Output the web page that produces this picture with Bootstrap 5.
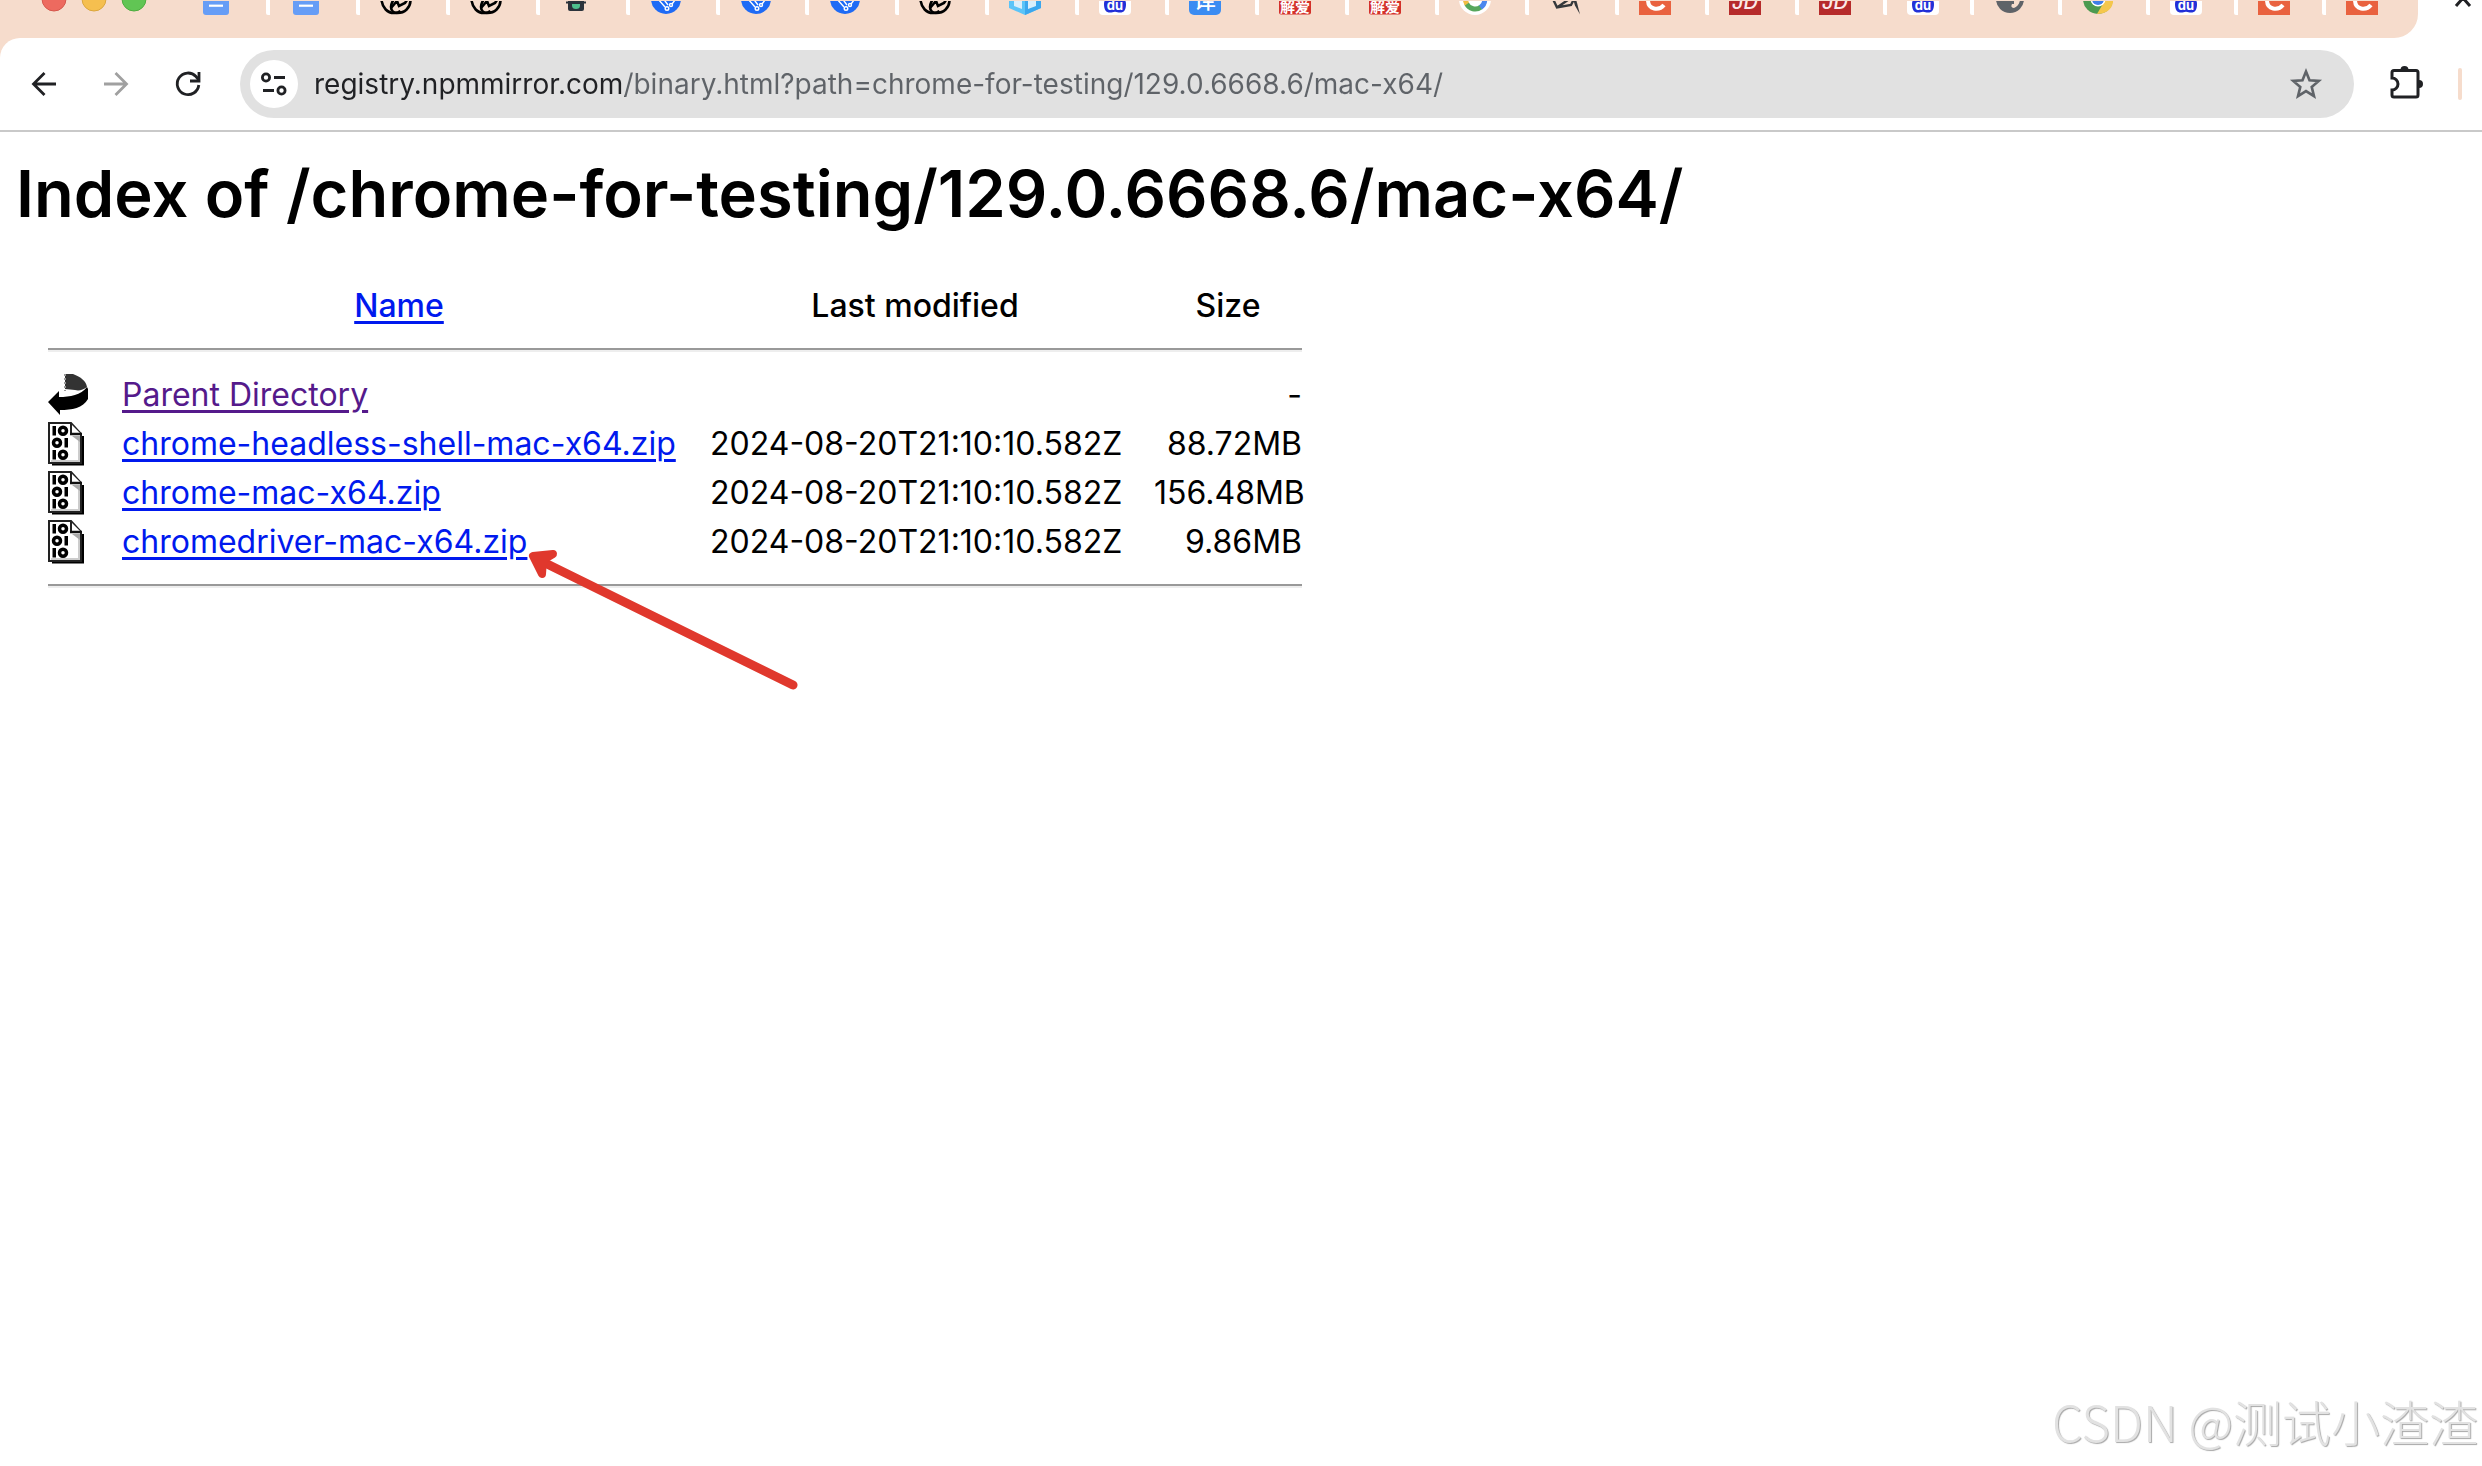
<!DOCTYPE html>
<html lang="en">
<head>
<meta charset="utf-8">
<meta name="viewport" content="width=device-width, initial-scale=1">
<title>Index of /chrome-for-testing/129.0.6668.6/mac-x64/</title>
<link href="https://cdn.jsdelivr.net/npm/bootstrap@5.3.0/dist/css/bootstrap.min.css" rel="stylesheet">
<style>
  body { font-family: Inter, "Liberation Sans", sans-serif; color: #000; background: #fff; }
  .strip-row { height: 38px; background: #fff; }
  .tab-strip { background: #f6dccc; border-bottom-right-radius: 24px; padding: 0 8px 0 40px; margin-right: 26px; }
  .lights { width: 136px; gap: 12px; }
  .lights svg { width: 28px; height: 12px; }
  .tab-cell { flex: 1 1 90px; height: 15px; min-width: 0; padding: 0 0 0 24px; border: 0; background: none; text-align: left; line-height: 0; }
  .tab-cell svg { width: 32px; height: 14px; display: block; }
  .tab-cell + .tab-cell { border-left: 4px solid #fff; padding-left: 20px; border-bottom-left-radius: 2px; }
  .tab-cell:nth-child(n+19) { flex-basis: 88px; }
  .win-btn { width: 38px; border: 0; background: none; padding: 0; line-height: 0; }
  .toolbar-wrap { background: #f6dccc; }
  .tool-row { height: 94px; background: #fff; border-top-left-radius: 20px; border-bottom: 2px solid #c9c9c9; padding: 0 20px 0 24px; }
  .tool-btn { width: 40px; height: 40px; padding: 0; border: 0; background: none; line-height: 0; flex: none; }
  .nav-set { gap: 32px; }
  .omnibox { height: 68px; border-radius: 34px; background: #e1e1e1; margin: 0 32px; padding: 0 28px 0 10px; }
  .site-info { width: 48px; height: 48px; border: 0; border-radius: 50%; background: #fff; padding: 0; line-height: 0; flex: none; }
  .url-input { border: 0; outline: 0; padding: 0; margin-left: 16px; min-width: 0; font-size: 28px; line-height: 40px; color: #5f6368;
    background: linear-gradient(90deg, #202124 311px, #5f6368 311px); -webkit-background-clip: text; background-clip: text; -webkit-text-fill-color: transparent; }
  .tool-split { width: 4px; height: 32px; border-radius: 2px; background: #f6dccc; margin-left: 32px; }
  .page-title { font-size: 65px; line-height: 76px; font-weight: 600; padding: 24px 16px 0; margin: 0 0 49px; }
  .listing { margin-left: 48px; padding-bottom: 120px; font-size: 32px; line-height: 49px; position: relative; width: max-content; }
  .listing table { border-collapse: collapse; table-layout: fixed; width: 1254px; }
  .listing td, .listing th { padding: 0 34px 0 0; white-space: nowrap; height: 49px; }
  .listing td:last-child, .listing th:last-child { padding-right: 0; }
  .listing th { font-weight: 500; text-align: center; }
  .listing td:last-child { text-align: right; }
  .listing td svg { display: block; }
  .listing a { color: #0019ee; text-decoration: underline; text-decoration-thickness: 3px; text-underline-offset: 4px; }
  .listing a.seen { color: #551a8b; }
  .listing .rule-cell { height: 40px; padding: 0; }
  .listing .rule-cell hr { margin: 0; border: 0; height: 4px; opacity: 1; background: linear-gradient(#999 2px, #eee 2px); }
  .pointer-mark { position: absolute; left: 476px; top: 265px; pointer-events: none; }
  .watermark { position: fixed; right: 4px; bottom: 10px; font: 300 49px/70px "Noto Sans CJK SC", sans-serif; color: #e2e2e2; text-shadow: 1px 1px 1px #a8a8a8; }
</style>
</head>
<body class="min-vh-100 d-flex flex-column">
<svg width="0" height="0" class="d-none" aria-hidden="true">
  <symbol id="i-doc" viewBox="0 18 32 14"><path d="M3 4h26v25a3 3 0 0 1-3 3H6a3 3 0 0 1-3-3z" fill="#669df6"/><path d="M9 22.700h14" stroke="#fff" stroke-width="2.200"/></symbol>
  <symbol id="i-knot" viewBox="0 18 32 14"><g fill="none" stroke="#000" stroke-width="2.600"><path d="M1.500 17c1 8 6 13 12.500 13 3 0 5-.500 6.500-2"/><path d="M30.500 17c0 8-6 13-13 13-4 0-6.500-2.500-6.500-6 0-3 1-5 3-8"/><path d="M11 25l6-7 2 5 6-3 2-3"/></g></symbol>
  <symbol id="i-cup" viewBox="0 18 32 14"><path d="M8 14h16v12a2 2 0 0 1-2 2H10a2 2 0 0 1-2-2z" fill="#2b333b"/><path d="M6 19.500h20" stroke="#2b333b" stroke-width="2"/><path d="M12 21h8v1.500a4 3.500 0 0 1-8 0z" fill="#4fc08d"/></symbol>
  <symbol id="i-git" viewBox="0 18 32 14"><circle cx="16" cy="16" r="15" fill="#1f6bf5"/><g fill="none" stroke="#fff" stroke-width="1.400"><path d="M8 16l7 8M12 14l6 8M25 17l-3 4"/><circle cx="17" cy="25.500" r="1.800"/><circle cx="21" cy="22" r="1.500"/></g></symbol>
  <symbol id="i-cube" viewBox="0 18 32 14"><path d="M0 14h32v11l-16 7-16-7z" fill="#5bc4f8"/><path d="M16 14h16v11l-16 7z" fill="#3ba7ee"/><path d="M5 17h8v9l-8-3zM19 17h8v6l-8 3z" fill="#d9eefb"/></symbol>
  <symbol id="i-du" viewBox="0 18 32 14"><rect width="32" height="32" rx="4" fill="#fff"/><path d="M5 21c0-5 4-9 11-9s11 4 11 9c0 6-2 8.500-6 8.500-2 0-3-.800-5-.800s-3 .800-5 .800c-4 0-6-2.500-6-8.500z" fill="#2230d8"/><text x="16" y="27" text-anchor="middle" font-family="Inter" font-size="13" font-weight="700" fill="#fff">du</text></symbol>
  <symbol id="i-yi" viewBox="0 18 32 14"><rect width="32" height="32" rx="5" fill="#3b8cf2"/><text x="16" y="25" text-anchor="middle" font-family="Noto Sans CJK SC" font-size="22" font-weight="500" fill="#fff">译</text></symbol>
  <symbol id="i-seal" viewBox="0 18 32 14"><rect y="2" width="32" height="29.500" rx="2" fill="#d3312a"/><text x="16" y="29" text-anchor="middle" font-family="Noto Sans CJK SC" font-size="15" font-weight="700" fill="#fff">解爱</text></symbol>
  <symbol id="i-g" viewBox="0 18 32 14"><circle cx="16" cy="16" r="16" fill="#fff"/><g fill="none" stroke-width="5"><path d="M7.500 20.500A9.500 9.500 0 0 0 22 24" stroke="#57a75c"/><path d="M6.500 14a9.500 9.500 0 0 0 1.500 7" stroke="#f2bd42"/><path d="M21.500 24.500a9.500 9.500 0 0 0 4-9.500" stroke="#4b87ee"/></g></symbol>
  <symbol id="i-bird" viewBox="0 18 32 14"><g fill="none" stroke="#35383b" stroke-width="2.400"><path d="M4 16l4 8.500 14-2.500 3-6M8 24.500l13-9"/></g><path d="M24 16h3l4 15.500-5-9z" fill="#35383b"/></symbol>
  <symbol id="i-c" viewBox="0 18 32 14"><rect width="32" height="32" fill="#e9623f"/><path d="M25 22c-5 6-16 5-16-5" fill="none" stroke="#fff" stroke-width="4"/></symbol>
  <symbol id="i-jd" viewBox="0 18 32 14"><rect width="32" height="32" fill="#b62b2b"/><text x="16" y="26" text-anchor="middle" font-family="Inter" font-style="italic" font-size="20" font-weight="500" fill="#fbe9e9">JD</text></symbol>
  <symbol id="i-globe" viewBox="0 18 32 14"><circle cx="16" cy="16" r="14" fill="#5f6368"/><path d="M12 16h14c0 5-3 8-6 9-3 0-3-2-2-4h2v-3h-8z" fill="#f6dccc"/></symbol>
  <symbol id="i-chrome" viewBox="0 18 32 14"><circle cx="16" cy="16" r="15" fill="#4c9a50"/><path d="M15 31l7-12h9c-1 8-8 12-16 12z" fill="#f5c74c"/><path d="M22 14h9v6h-9z" fill="#f5c74c"/><circle cx="16" cy="16" r="7.500" fill="#fff"/><circle cx="16" cy="16" r="6" fill="#3f7de8"/></symbol>
  <symbol id="i-bin" viewBox="0 0 36 44"><path d="M4 42h31V14" fill="none" stroke="#000" stroke-width="3"/><path d="M1 1h22l10 11v29H1z" fill="#fff" stroke="#222" stroke-width="2"/><path d="M3 39h28V14" fill="none" stroke="#ccc" stroke-width="2"/><path d="M23 2v10h10" fill="#fff" stroke="#222" stroke-width="2"/><path d="M22 12h12" stroke="#111" stroke-width="2.500"/><path d="M24 14h8v6z" fill="#aaa"/><path d="M4.500 4h3.500v9.500H4.500zM16.500 16h3.500v9.500h-3.500zM4.500 28h3.500v9.500H4.500z" fill="#000"/><g fill="none" stroke="#000" stroke-width="3.500"><ellipse cx="15" cy="8.800" rx="3.500" ry="3.500"/><ellipse cx="9" cy="20.800" rx="3.500" ry="3.500"/><ellipse cx="15" cy="32.800" rx="3.500" ry="3.500"/></g></symbol>
</svg>

<header>
  <div class="strip-row d-flex">
    <div class="tab-strip d-flex flex-grow-1 align-items-start">
      <div class="lights d-flex flex-shrink-0">
        <svg viewBox="0 0 28 12"><circle cx="14" cy="-1" r="12" fill="#ed6a5f" stroke="#d5564b"/></svg>
        <svg viewBox="0 0 28 12"><circle cx="14" cy="-1" r="12" fill="#f5bf4f" stroke="#dba63c"/></svg>
        <svg viewBox="0 0 28 12"><circle cx="14" cy="-1" r="12" fill="#61c554" stroke="#4dac3f"/></svg>
      </div>
      <div class="d-flex flex-grow-1" role="tablist" id="tabs">
        <button class="tab-cell" role="tab" aria-label="Document"><svg><use href="#i-doc"/></svg></button>
        <button class="tab-cell" role="tab" aria-label="Document"><svg><use href="#i-doc"/></svg></button>
        <button class="tab-cell" role="tab" aria-label="Chat"><svg><use href="#i-knot"/></svg></button>
        <button class="tab-cell" role="tab" aria-label="Chat"><svg><use href="#i-knot"/></svg></button>
        <button class="tab-cell" role="tab" aria-label="Tool"><svg><use href="#i-cup"/></svg></button>
        <button class="tab-cell" role="tab" aria-label="Repository"><svg><use href="#i-git"/></svg></button>
        <button class="tab-cell" role="tab" aria-label="Repository"><svg><use href="#i-git"/></svg></button>
        <button class="tab-cell" role="tab" aria-label="Repository"><svg><use href="#i-git"/></svg></button>
        <button class="tab-cell" role="tab" aria-label="Chat"><svg><use href="#i-knot"/></svg></button>
        <button class="tab-cell" role="tab" aria-label="Cube"><svg><use href="#i-cube"/></svg></button>
        <button class="tab-cell" role="tab" aria-label="Baidu"><svg><use href="#i-du"/></svg></button>
        <button class="tab-cell" role="tab" aria-label="Translate"><svg><use href="#i-yi"/></svg></button>
        <button class="tab-cell" role="tab" aria-label="Seal"><svg><use href="#i-seal"/></svg></button>
        <button class="tab-cell" role="tab" aria-label="Seal"><svg><use href="#i-seal"/></svg></button>
        <button class="tab-cell" role="tab" aria-label="Google"><svg><use href="#i-g"/></svg></button>
        <button class="tab-cell" role="tab" aria-label="Bird"><svg><use href="#i-bird"/></svg></button>
        <button class="tab-cell" role="tab" aria-label="CSDN"><svg><use href="#i-c"/></svg></button>
        <button class="tab-cell" role="tab" aria-label="JD"><svg><use href="#i-jd"/></svg></button>
        <button class="tab-cell" role="tab" aria-label="JD"><svg><use href="#i-jd"/></svg></button>
        <button class="tab-cell" role="tab" aria-label="Baidu"><svg><use href="#i-du"/></svg></button>
        <button class="tab-cell" role="tab" aria-label="Site"><svg><use href="#i-globe"/></svg></button>
        <button class="tab-cell" role="tab" aria-label="Chrome"><svg><use href="#i-chrome"/></svg></button>
        <button class="tab-cell" role="tab" aria-label="Baidu"><svg><use href="#i-du"/></svg></button>
        <button class="tab-cell" role="tab" aria-label="CSDN"><svg><use href="#i-c"/></svg></button>
        <button class="tab-cell" role="tab" aria-label="CSDN"><svg><use href="#i-c"/></svg></button>
      </div>
    </div>
    <button class="win-btn d-flex align-items-start justify-content-center" aria-label="Close tab"><svg width="18" height="8" viewBox="0 0 18 8"><path d="M2 6L9-2l7 8" fill="none" stroke="#202124" stroke-width="3"/></svg></button>
  </div>

  <div class="toolbar-wrap">
    <div class="tool-row d-flex align-items-center">
      <div class="nav-set d-flex">
        <button class="tool-btn" aria-label="Back"><svg width="40" height="40" viewBox="0 0 40 40"><path d="M32 20H10M20.500 9L9.500 20l11 11" fill="none" stroke="#202124" stroke-width="2.800"/></svg></button>
        <button class="tool-btn" aria-label="Forward"><svg width="40" height="40" viewBox="0 0 40 40"><path d="M8 20h22M19.500 9l11 11-11 11" fill="none" stroke="#a0a0a0" stroke-width="2.800"/></svg></button>
        <button class="tool-btn" aria-label="Reload"><svg width="40" height="40" viewBox="0 0 40 40"><path d="M30.800 21A10.800 10.800 0 1 1 28 12.500l2.500 3" fill="none" stroke="#202124" stroke-width="2.800"/><path d="M31 8v9H22" fill="none" stroke="#202124" stroke-width="2.800"/></svg></button>
      </div>
      <div class="omnibox d-flex flex-grow-1 align-items-center">
        <button class="site-info" aria-label="Site information"><svg width="32" height="32" viewBox="0 0 32 32"><g fill="none" stroke="#202124" stroke-width="2.800"><circle cx="8" cy="9.500" r="3.600"/><path d="M16 9.500h11M5 22.500h11"/><circle cx="23.500" cy="22.500" r="3.600"/></g></svg></button>
        <input class="url-input flex-grow-1" type="text" aria-label="Address" spellcheck="false" value="registry.npmmirror.com/binary.html?path=chrome-for-testing/129.0.6668.6/mac-x64/">
        <button class="tool-btn" aria-label="Bookmark"><svg width="40" height="40" viewBox="0 0 40 40"><path d="M20 7.500l3.500 8.700 9.300.700-7.100 6 2.300 9.200-8-5-8 5 2.300-9.200-7.100-6 9.300-.700z" fill="none" stroke="#5f6368" stroke-width="2.600"/></svg></button>
      </div>
      <button class="tool-btn" aria-label="Extensions"><svg width="40" height="40" viewBox="0 0 40 40"><path d="M8 6.500h22a2 2 0 0 1 2 2V31a2 2 0 0 1-2 2H8a2 2 0 0 1-2-2v-5a6 6 0 0 0 0-12V8.500a2 2 0 0 1 2-2z" fill="none" stroke="#202124" stroke-width="3"/><path d="M14.500 6a4 4 0 0 1 8 0zM33 16a4 4 0 0 1 0 8z" fill="#202124"/></svg></button>
      <div class="tool-split flex-shrink-0"></div>
    </div>
  </div>
</header>

<main class="flex-grow-1">
  <h1 class="page-title">Index of /chrome-for-testing/129.0.6668.6/mac-x64/</h1>
  <div class="listing">
    <table>
      <colgroup><col style="width:74px"><col style="width:588px"><col style="width:444px"><col style="width:148px"></colgroup>
      <thead>
        <tr><th></th><th><a href="#name">Name</a></th><th>Last modified</th><th>Size</th></tr>
        <tr><td colspan="4" class="rule-cell"><hr></td></tr>
      </thead>
      <tbody>
        <tr><td><svg width="40" height="44" viewBox="0 0 40 44"><path d="M17 1h8c8 3 13 7 14 13-4 3-8 4-12 3l-10-1z" fill="#333"/><path d="M17 1v17" stroke="#999" stroke-width="2" stroke-dasharray="2 2"/><path d="M0 29l11-11v6c11 0 22-2 28-10l1 2v10c-5 9-16 11-28 11v5z" fill="#000"/></svg></td><td><a class="seen" href="#parent">Parent Directory</a></td><td></td><td>-</td></tr>
        <tr><td><svg width="36" height="44"><use href="#i-bin"/></svg></td><td><a href="#shell">chrome-headless-shell-mac-x64.zip</a></td><td>2024-08-20T21:10:10.582Z</td><td>88.72MB</td></tr>
        <tr><td><svg width="36" height="44"><use href="#i-bin"/></svg></td><td><a href="#chrome">chrome-mac-x64.zip</a></td><td>2024-08-20T21:10:10.582Z</td><td>156.48MB</td></tr>
        <tr><td><svg width="36" height="44"><use href="#i-bin"/></svg></td><td><a href="#driver">chromedriver-mac-x64.zip</a></td><td>2024-08-20T21:10:10.582Z</td><td>9.86MB</td></tr>
        <tr><td colspan="4" class="rule-cell"><hr></td></tr>
      </tbody>
    </table>
    <svg class="pointer-mark" width="280" height="150" viewBox="0 0 280 150" aria-hidden="true"><path d="M15 14l254 125" stroke="#e0382d" stroke-width="9" stroke-linecap="round"/><path d="M9 10l20-2-10 6-1 14z" fill="#e0382d" stroke="#e0382d" stroke-width="8" stroke-linejoin="round"/></svg>
  </div>
</main>
<div class="watermark">CSDN @测试小渣渣</div>
<script src="https://cdn.jsdelivr.net/npm/bootstrap@5.3.0/dist/js/bootstrap.bundle.min.js"></script>
</body>
</html>
